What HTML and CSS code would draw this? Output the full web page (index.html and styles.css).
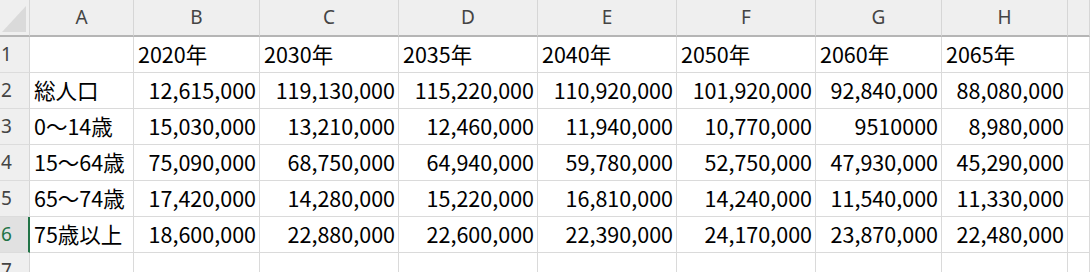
FILE: index.html
```html
<!DOCTYPE html>
<html lang="ja">
<head>
<meta charset="utf-8">
<link rel="stylesheet" href="styles.css">
</head>
<body>
<div class="sheet">
  <div class="corner"></div>
  <div class="colhead">A</div>
  <div class="colhead">B</div>
  <div class="colhead">C</div>
  <div class="colhead">D</div>
  <div class="colhead">E</div>
  <div class="colhead">F</div>
  <div class="colhead">G</div>
  <div class="colhead">H</div>
  <div class="colhead"></div>

  <div class="rowhead">1</div>
  <div class="cell"></div>
  <div class="cell">2020年</div>
  <div class="cell">2030年</div>
  <div class="cell">2035年</div>
  <div class="cell">2040年</div>
  <div class="cell">2050年</div>
  <div class="cell">2060年</div>
  <div class="cell">2065年</div>
  <div class="cell"></div>

  <div class="rowhead">2</div>
  <div class="cell">総人口</div>
  <div class="cell num">12,615,000</div>
  <div class="cell num">119,130,000</div>
  <div class="cell num">115,220,000</div>
  <div class="cell num">110,920,000</div>
  <div class="cell num">101,920,000</div>
  <div class="cell num">92,840,000</div>
  <div class="cell num">88,080,000</div>
  <div class="cell"></div>

  <div class="rowhead">3</div>
  <div class="cell">0～14歳</div>
  <div class="cell num">15,030,000</div>
  <div class="cell num">13,210,000</div>
  <div class="cell num">12,460,000</div>
  <div class="cell num">11,940,000</div>
  <div class="cell num">10,770,000</div>
  <div class="cell num">9510000</div>
  <div class="cell num">8,980,000</div>
  <div class="cell"></div>

  <div class="rowhead">4</div>
  <div class="cell">15～64歳</div>
  <div class="cell num">75,090,000</div>
  <div class="cell num">68,750,000</div>
  <div class="cell num">64,940,000</div>
  <div class="cell num">59,780,000</div>
  <div class="cell num">52,750,000</div>
  <div class="cell num">47,930,000</div>
  <div class="cell num">45,290,000</div>
  <div class="cell"></div>

  <div class="rowhead">5</div>
  <div class="cell">65～74歳</div>
  <div class="cell num">17,420,000</div>
  <div class="cell num">14,280,000</div>
  <div class="cell num">15,220,000</div>
  <div class="cell num">16,810,000</div>
  <div class="cell num">14,240,000</div>
  <div class="cell num">11,540,000</div>
  <div class="cell num">11,330,000</div>
  <div class="cell"></div>

  <div class="rowhead active">6</div>
  <div class="cell">75歳以上</div>
  <div class="cell num">18,600,000</div>
  <div class="cell num">22,880,000</div>
  <div class="cell num">22,600,000</div>
  <div class="cell num">22,390,000</div>
  <div class="cell num">24,170,000</div>
  <div class="cell num">23,870,000</div>
  <div class="cell num">22,480,000</div>
  <div class="cell"></div>

  <div class="rowhead">7</div>
  <div class="cell"></div>
  <div class="cell"></div>
  <div class="cell"></div>
  <div class="cell"></div>
  <div class="cell"></div>
  <div class="cell"></div>
  <div class="cell"></div>
  <div class="cell"></div>
  <div class="cell"></div>
</div>
</body>
</html>
```

FILE: styles.css
```css
html, body {
  margin: 0;
  padding: 0;
  background: #ffffff;
  overflow: hidden;
}

.sheet {
  display: grid;
  grid-template-columns: 30px 104px 126px 139px 139px 139px 139px 126px 126px 1fr;
  grid-template-rows: 37px repeat(7, 36px);
  width: 1090px;
  font-family: "Noto Sans CJK JP", "Noto Sans", sans-serif;
  font-size: 21.5px;
  color: #000;
}

.sheet > div {
  box-sizing: border-box;
  white-space: nowrap;
  overflow: hidden;
}

.corner {
  position: relative;
  background: #efefef;
  border-right: 1px solid #d6d6d6;
  border-bottom: 2px solid #b5b5b5;
}

.corner::after {
  content: "";
  position: absolute;
  left: 2px;
  top: 6px;
  width: 24px;
  height: 26px;
  background: #dadada;
  clip-path: polygon(100% 0, 100% 100%, 0 100%);
}

.colhead {
  background: #efefef;
  border-right: 1px solid #d6d6d6;
  border-bottom: 2px solid #b5b5b5;
  color: #444;
  font-family: "Noto Sans", "DejaVu Sans", sans-serif;
  font-size: 19px;
  display: flex;
  align-items: center;
  justify-content: center;
  padding-bottom: 2px;
}

.rowhead {
  background: #efefef;
  border-right: 1px solid #d6d6d6;
  border-bottom: 1px solid #dcdcdc;
  color: #444;
  font-family: "Noto Sans", "DejaVu Sans", sans-serif;
  font-size: 19px;
  display: flex;
  align-items: center;
  padding-left: 1px;
  padding-bottom: 2px;
}

.rowhead.active {
  background: #e1e1e1;
  color: #217346;
  border-right: 2px solid #217346;
}

.cell {
  border-right: 1px solid #dadada;
  border-bottom: 1px solid #dadada;
  line-height: 33px;
  padding: 0 3px 2px 4px;
}

.num {
  text-align: right;
}
```
